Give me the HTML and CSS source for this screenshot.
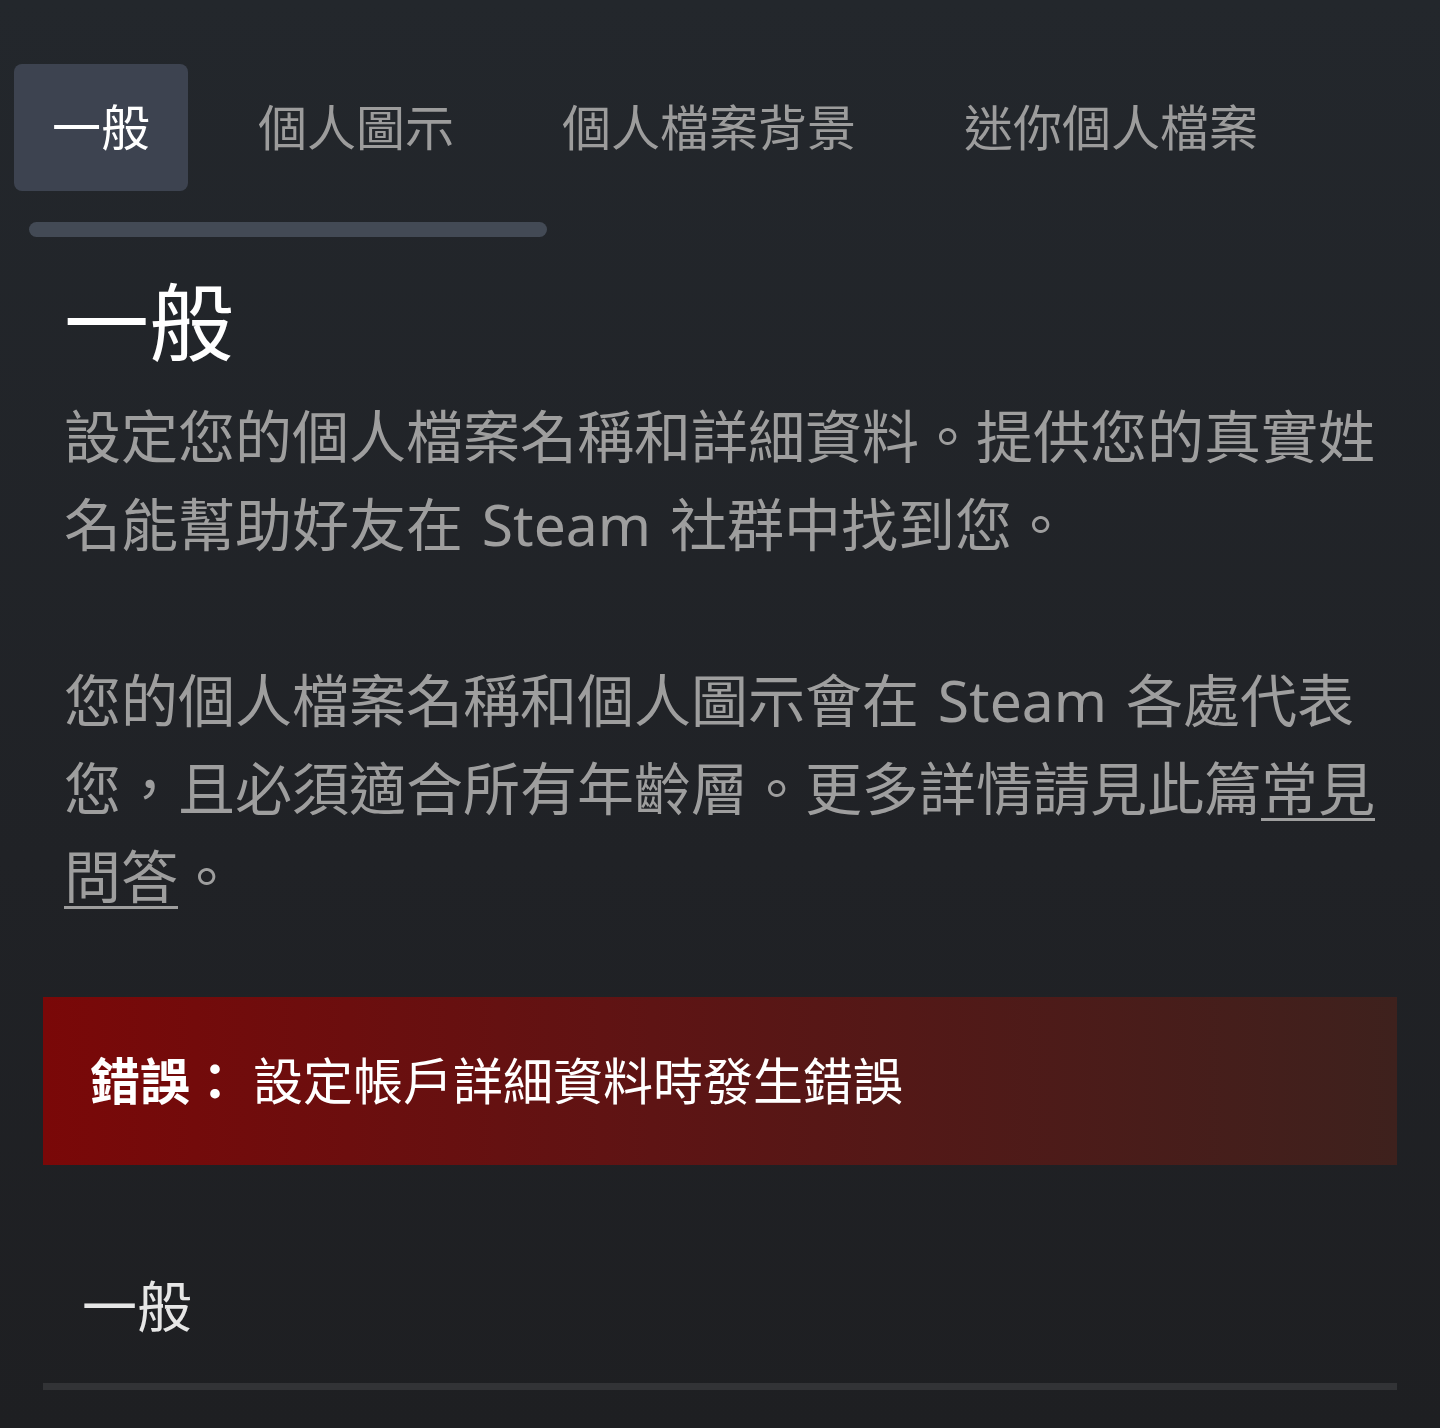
FILE: index.html
```html
<!DOCTYPE html>
<html lang="zh-Hant">
<head>
<meta charset="utf-8">
<title>一般</title>
<link rel="stylesheet" href="styles.css">
</head>
<body>
<div class="page">
  <nav class="tabs">
    <div class="tab active">一般</div>
    <div class="tab">個人圖示</div>
    <div class="tab">個人檔案背景</div>
    <div class="tab">迷你個人檔案</div>
  </nav>
  <div class="scrollbar"></div>
  <section class="intro">
    <h1 class="title">一般</h1>
    <p class="desc">設定您的個人檔案名稱和詳細資料。提供您的真實姓名能幫助好友在 Steam 社群中找到您。</p>
    <p class="desc second">您的個人檔案名稱和個人圖示會在 Steam 各處代表您，且必須適合所有年齡層。更多詳情請見此篇<a class="faq" href="#">常見問答</a>。</p>
  </section>
  <div class="error"><strong>錯誤：</strong> 設定帳戶詳細資料時發生錯誤</div>
  <h2 class="subtitle">一般</h2>
  <div class="divider"></div>
</div>
</body>
</html>
```

FILE: styles.css
```css
html, body {
  margin: 0;
  padding: 0;
}
body {
  width: 1440px;
  min-height: 1428px;
  background: linear-gradient(180deg, #23272c 0%, #202226 60%, #1e1f22 100%);
  font-family: "Noto Sans", "Noto Sans CJK TC", sans-serif;
  overflow: hidden;
}
.page {
  display: flex;
  flex-direction: column;
  padding-top: 64px;
}
.tabs {
  display: flex;
  gap: 32px;
  padding-left: 14px;
}
.tab {
  height: 127px;
  box-sizing: border-box;
  padding: 0 38px 1px;
  display: flex;
  align-items: center;
  font-size: 49px;
  line-height: 1;
  color: #9c9c9c;
  border-radius: 8px;
  white-space: nowrap;
}
.tab.active {
  background: #3d4350;
  color: #ffffff;
}
.scrollbar {
  margin: 31px 0 0 29px;
  width: 518px;
  height: 15px;
  border-radius: 8px;
  background: #434a55;
}
.intro {
  padding: 0 64px;
}
.title {
  margin: 43px 0 0;
  font-size: 85px;
  line-height: 85px;
  font-weight: 400;
  color: #ffffff;
}
.desc {
  margin: 27px 0 0;
  font-size: 57px;
  line-height: 88px;
  word-spacing: 4px;
  color: #9e9e9e;
}
.desc.second {
  margin-top: 88px;
}
.faq {
  color: #9e9e9e;
  text-decoration: underline;
  text-decoration-thickness: 3px;
  text-underline-offset: 8px;
}
.error {
  margin: 77px 43px 0;
  height: 168px;
  box-sizing: border-box;
  padding: 0 0 0 47px;
  display: flex;
  align-items: center;
  white-space: pre;
  font-size: 50px;
  line-height: 1;
  color: #ffffff;
  background: linear-gradient(90deg, #7a0808 0%, #5e1414 45%, #3e211d 100%);
}
.error strong {
  font-weight: 700;
}
.subtitle {
  margin: 113px 0 0 82px;
  font-size: 55px;
  line-height: 55px;
  font-weight: 400;
  color: #e6e6e6;
}
.divider {
  margin: 50px 43px 0;
  height: 7px;
  background: #323336;
}
```
